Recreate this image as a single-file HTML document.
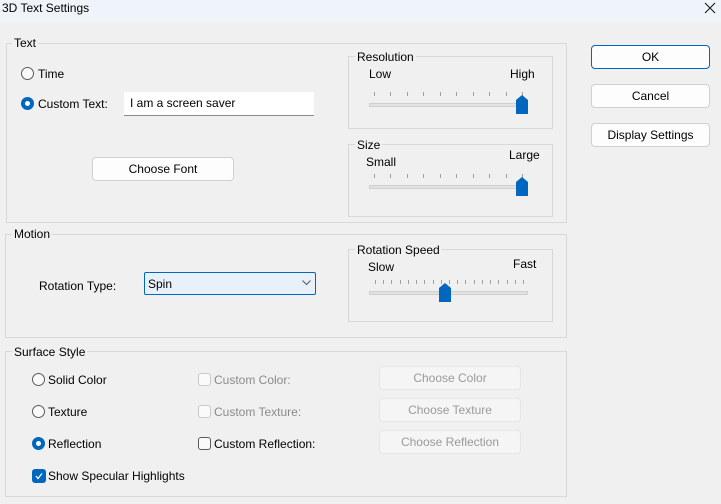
<!DOCTYPE html><html><head><meta charset="utf-8"><style>
*{box-sizing:border-box}
body{margin:0;width:721px;height:504px;background:#f0f0f0;font-family:"Liberation Sans",sans-serif;font-size:12px;color:#000;position:relative;overflow:hidden}
.a{position:absolute}
.t{position:absolute;white-space:nowrap;line-height:14px}
.g{position:absolute;border:1px solid #d8d8d8}
.gl{position:absolute;background:#f0f0f0;padding:0 2px;line-height:14px;white-space:nowrap}
.btn{position:absolute;background:#fdfdfd;border:1px solid #d0d0d0;border-radius:4px;text-align:center;line-height:23px}
.dis{background:#f5f5f5;border-color:#e5e5e5;color:#9a9a9a}
.r{position:absolute;width:13px;height:13px;border:1px solid #5a5a5a;border-radius:50%;background:#fafafa}
.r.on{border:4px solid #0067c0;background:#fff}
.c{position:absolute;width:13px;height:13px;border:1px solid #5a5a5a;border-radius:3px;background:#fafafa}
.c.dis{border-color:#c8c8c8}
.trk{position:absolute;height:4px;background:#e2e2e2;border:1px solid #d0d0d0}
.tk{position:absolute;width:1px;height:4px;background:#a0a0a0}
</style></head><body>
<div class="a" style="left:0;top:0;width:721px;height:22px;background:#eef4f9"></div>
<div class="t" style="left:2px;top:1px;">3D Text Settings</div>
<svg class="a" style="left:704px;top:2px" width="12" height="12"><path d="M1 1L11 11M11 1L1 11" stroke="#222" stroke-width="1.2"/></svg>

<div class="g" style="left:6px;top:43px;width:561px;height:180px"></div>
<div class="gl" style="left:12px;top:36px">Text</div>
<div class="r" style="left:21px;top:67px"></div><div class="t" style="left:38px;top:67px">Time</div>
<div class="r on" style="left:21px;top:97px"></div><div class="t" style="left:38px;top:97px">Custom Text:</div>
<div class="a" style="left:124px;top:92px;width:190px;height:24px;background:#fff;border-bottom:1px solid #888"></div>
<div class="t" style="left:130px;top:96px">I am a screen saver</div>
<div class="btn" style="left:92px;top:157px;width:142px;height:24px">Choose Font</div>

<div class="g" style="left:348px;top:56px;width:205px;height:73px"></div>
<div class="gl" style="left:355px;top:50px">Resolution</div>
<div class="t" style="left:369px;top:67px">Low</div><div class="t" style="left:510px;top:67px">High</div>
<div class="g" style="left:348px;top:144px;width:205px;height:73px"></div>
<div class="gl" style="left:355px;top:138px">Size</div>
<div class="t" style="left:366px;top:155px">Small</div><div class="t" style="left:509px;top:148px">Large</div>

<div class="g" style="left:5px;top:234px;width:562px;height:104px"></div>
<div class="gl" style="left:12px;top:227px">Motion</div>
<div class="t" style="left:39px;top:279px">Rotation Type:</div>
<div class="a" style="left:144px;top:272px;width:172px;height:23px;background:#e8f1fa;border:1px solid #0067c0;border-radius:2px"></div>
<div class="t" style="left:148px;top:277px">Spin</div>
<svg class="a" style="left:302px;top:280px" width="9" height="6"><path d="M0.5 0.5L4.5 4.5L8.5 0.5" stroke="#555" fill="none"/></svg>
<div class="g" style="left:348px;top:249px;width:205px;height:73px"></div>
<div class="gl" style="left:355px;top:243px">Rotation Speed</div>
<div class="t" style="left:368px;top:260px">Slow</div><div class="t" style="left:513px;top:257px">Fast</div>

<div class="g" style="left:5px;top:351px;width:562px;height:146px"></div>
<div class="gl" style="left:12px;top:345px">Surface Style</div>
<div class="r" style="left:32px;top:373px"></div><div class="t" style="left:48px;top:373px">Solid Color</div>
<div class="r" style="left:32px;top:405px"></div><div class="t" style="left:48px;top:405px">Texture</div>
<div class="r on" style="left:32px;top:437px"></div><div class="t" style="left:48px;top:437px">Reflection</div>
<div class="a" style="left:32px;top:469px;width:14px;height:14px;background:#0067c0;border-radius:3px"></div>
<svg class="a" style="left:34px;top:471px" width="10" height="10"><path d="M2 5L4 7.5L8 2.5" stroke="#fff" stroke-width="1.3" fill="none"/></svg>
<div class="t" style="left:48px;top:469px">Show Specular Highlights</div>
<div class="c dis" style="left:198px;top:373px"></div><div class="t" style="left:214px;top:373px;color:#8a8a8a">Custom Color:</div>
<div class="c dis" style="left:198px;top:405px"></div><div class="t" style="left:214px;top:405px;color:#8a8a8a">Custom Texture:</div>
<div class="c" style="left:198px;top:437px"></div><div class="t" style="left:214px;top:437px">Custom Reflection:</div>
<div class="btn dis" style="left:379px;top:366px;width:142px;height:24px">Choose Color</div>
<div class="btn dis" style="left:379px;top:398px;width:142px;height:24px">Choose Texture</div>
<div class="btn dis" style="left:379px;top:430px;width:142px;height:24px">Choose Reflection</div>

<div class="btn" style="left:591px;top:45px;width:119px;height:24px;border-color:#0067c0">OK</div>
<div class="btn" style="left:591px;top:84px;width:119px;height:24px">Cancel</div>
<div class="btn" style="left:591px;top:123px;width:119px;height:24px">Display Settings</div>

<div id="s"></div>
<script>
var h='';
function sl(y,ticks,x0,x1,tx){
 for(var i=0;i<ticks;i++){var x=Math.round(x0+(x1-x0)*i/(ticks-1));h+='<div class="tk" style="left:'+x+'px;top:'+y+'px"></div>';}
 h+='<div class="trk" style="left:369px;top:'+(y+11)+'px;width:159px"></div>';
 h+='<svg class="a" style="left:'+tx+'px;top:'+(y+3)+'px" width="12" height="19"><path d="M0 5L6 0L12 5V19H0Z" fill="#0067c0"/></svg>';
}
sl(92,10,374,522,516);
sl(174,10,374,522,516);
sl(280,19,375,523,439);
document.getElementById('s').outerHTML=h;
</script>
</body></html>
